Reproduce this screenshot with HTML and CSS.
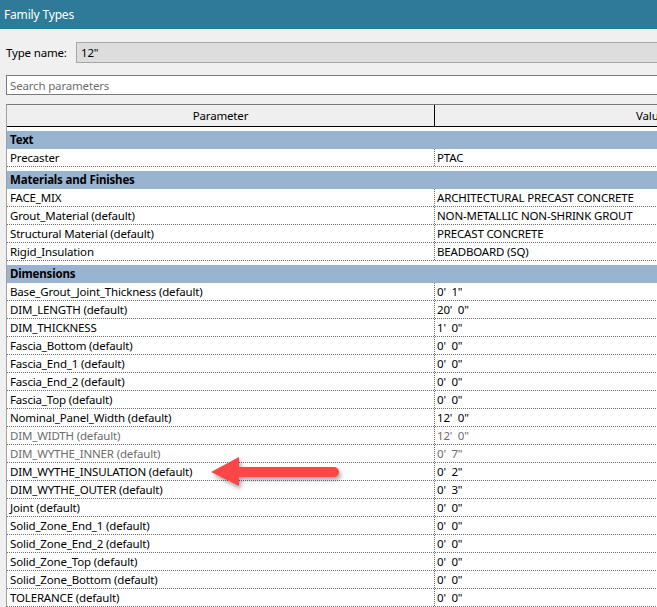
FILE: index.html
```html
<!DOCTYPE html>
<html lang="en">
  <head>
    <meta charset="UTF-8" />
    <title>Family Types</title>
    <link rel="stylesheet" href="styles.css">
  </head>
  <body>
    <div class="window">
      <div class="titlebar">Family Types</div>

      <div class="content">
        <div class="type-row">
          <span class="type-label">Type name:</span>
          <div class="type-input">12"</div>
        </div>

        <input class="search" type="text" placeholder="Search parameters" />

        <div class="grid">
          <div class="grid-head">
            <div class="head-param">Parameter</div>
            <div class="head-value">Value</div>
          </div>

          <div class="group">Text</div>
          <div class="row"><div class="param">Precaster</div><div class="value">PTAC</div></div>

          <div class="group">Materials and Finishes</div>
          <div class="row"><div class="param">FACE_MIX</div><div class="value">ARCHITECTURAL PRECAST CONCRETE</div></div>
          <div class="row"><div class="param">Grout_Material (default)</div><div class="value">NON-METALLIC NON-SHRINK GROUT</div></div>
          <div class="row"><div class="param">Structural Material (default)</div><div class="value">PRECAST CONCRETE</div></div>
          <div class="row"><div class="param">Rigid_Insulation</div><div class="value">BEADBOARD (SQ)</div></div>

          <div class="group">Dimensions</div>
          <div class="row"><div class="param">Base_Grout_Joint_Thickness (default)</div><div class="value">0'&nbsp; 1"</div></div>
          <div class="row"><div class="param">DIM_LENGTH (default)</div><div class="value">20'&nbsp; 0"</div></div>
          <div class="row"><div class="param">DIM_THICKNESS</div><div class="value">1'&nbsp; 0"</div></div>
          <div class="row"><div class="param">Fascia_Bottom (default)</div><div class="value">0'&nbsp; 0"</div></div>
          <div class="row"><div class="param">Fascia_End_1 (default)</div><div class="value">0'&nbsp; 0"</div></div>
          <div class="row"><div class="param">Fascia_End_2 (default)</div><div class="value">0'&nbsp; 0"</div></div>
          <div class="row"><div class="param">Fascia_Top (default)</div><div class="value">0'&nbsp; 0"</div></div>
          <div class="row"><div class="param">Nominal_Panel_Width (default)</div><div class="value">12'&nbsp; 0"</div></div>
          <div class="row disabled"><div class="param">DIM_WIDTH (default)</div><div class="value">12'&nbsp; 0"</div></div>
          <div class="row disabled"><div class="param">DIM_WYTHE_INNER (default)</div><div class="value">0'&nbsp; 7"</div></div>
          <div class="row"><div class="param">DIM_WYTHE_INSULATION (default)</div><div class="value">0'&nbsp; 2"</div></div>
          <div class="row"><div class="param">DIM_WYTHE_OUTER (default)</div><div class="value">0'&nbsp; 3"</div></div>
          <div class="row"><div class="param">Joint (default)</div><div class="value">0'&nbsp; 0"</div></div>
          <div class="row"><div class="param">Solid_Zone_End_1 (default)</div><div class="value">0'&nbsp; 0"</div></div>
          <div class="row"><div class="param">Solid_Zone_End_2 (default)</div><div class="value">0'&nbsp; 0"</div></div>
          <div class="row"><div class="param">Solid_Zone_Top (default)</div><div class="value">0'&nbsp; 0"</div></div>
          <div class="row"><div class="param">Solid_Zone_Bottom (default)</div><div class="value">0'&nbsp; 0"</div></div>
          <div class="row"><div class="param">TOLERANCE (default)</div><div class="value">0'&nbsp; 0"</div></div>
        </div>
      </div>

      <!-- callout arrow drawn over the grid -->
      <svg class="callout" viewBox="0 0 150 50" width="150" height="50">
        <rect x="34" y="22" width="105" height="10" rx="5" />
        <polygon points="11,27 39,12 39,41" />
      </svg>
    </div>
  </body>
</html>
```

FILE: styles.css
```css
* {
  margin: 0;
  padding: 0;
  box-sizing: border-box;
}

body {
  width: 657px;
  height: 607px;
  overflow: hidden;
  font-family: "Noto Sans", "Open Sans", sans-serif;
  font-size: 11.5px;
  letter-spacing: -0.17px;
  color: #000;
  background: #f0f0f0;
}

.window {
  position: relative;
  height: 607px;
}

.titlebar {
  height: 29px;
  padding-left: 4px;
  display: flex;
  align-items: center;
  background: #2e7b99;
  color: #fff;
  font-size: 12px;
}

.content {
  padding: 13px 0 0 6px;
  width: 1000px;
}

.type-row {
  display: flex;
  align-items: center;
  height: 21px;
}

.type-label {
  width: 70px;
}

.type-input {
  flex: 1;
  height: 21px;
  line-height: 19px;
  padding-left: 4px;
  background: #dddddd;
  border: 1px solid #a6a6a6;
}

.search {
  display: block;
  width: 100%;
  height: 20px;
  margin-top: 12px;
  padding-left: 3px;
  border: 1px solid #7a7a7a;
  background: #fff;
  font: inherit;
  letter-spacing: inherit;
  outline: none;
}

.search::placeholder {
  color: #6d6d6d;
}

.grid {
  margin-top: 9px;
  width: 860px;
  background: #fff;
  border-top: 1px solid #7a7a7a;
  border-left: 1px solid #a0a0a0;
}

.grid-head {
  display: flex;
  height: 22px;
  background: #efefef;
  border-bottom: 1px solid #000;
}

.head-param,
.head-value {
  display: flex;
  align-items: center;
  justify-content: center;
}

.head-param {
  width: 428px;
  border-right: 1px solid #000;
}

.head-value {
  flex: 1;
}

.group {
  height: 18px;
  margin-top: 4px;
  padding-left: 3px;
  line-height: 18px;
  background: #99b4d1;
  font-weight: 700;
}

.row {
  display: flex;
  height: 18px;
  line-height: 17px;
  border-bottom: 1px dotted #6e6e6e;
}

.param {
  width: 428px;
  padding-left: 3px;
  border-right: 1px dotted #6e6e6e;
  white-space: nowrap;
}

.value {
  flex: 1;
  padding-left: 2px;
  white-space: nowrap;
}

.row.disabled {
  color: #6d6d6d;
}

.callout {
  position: absolute;
  left: 200px;
  top: 445px;
  fill: #ff4646;
  filter: drop-shadow(2px 3px 2px rgba(0, 0, 0, 0.35));
}
```
